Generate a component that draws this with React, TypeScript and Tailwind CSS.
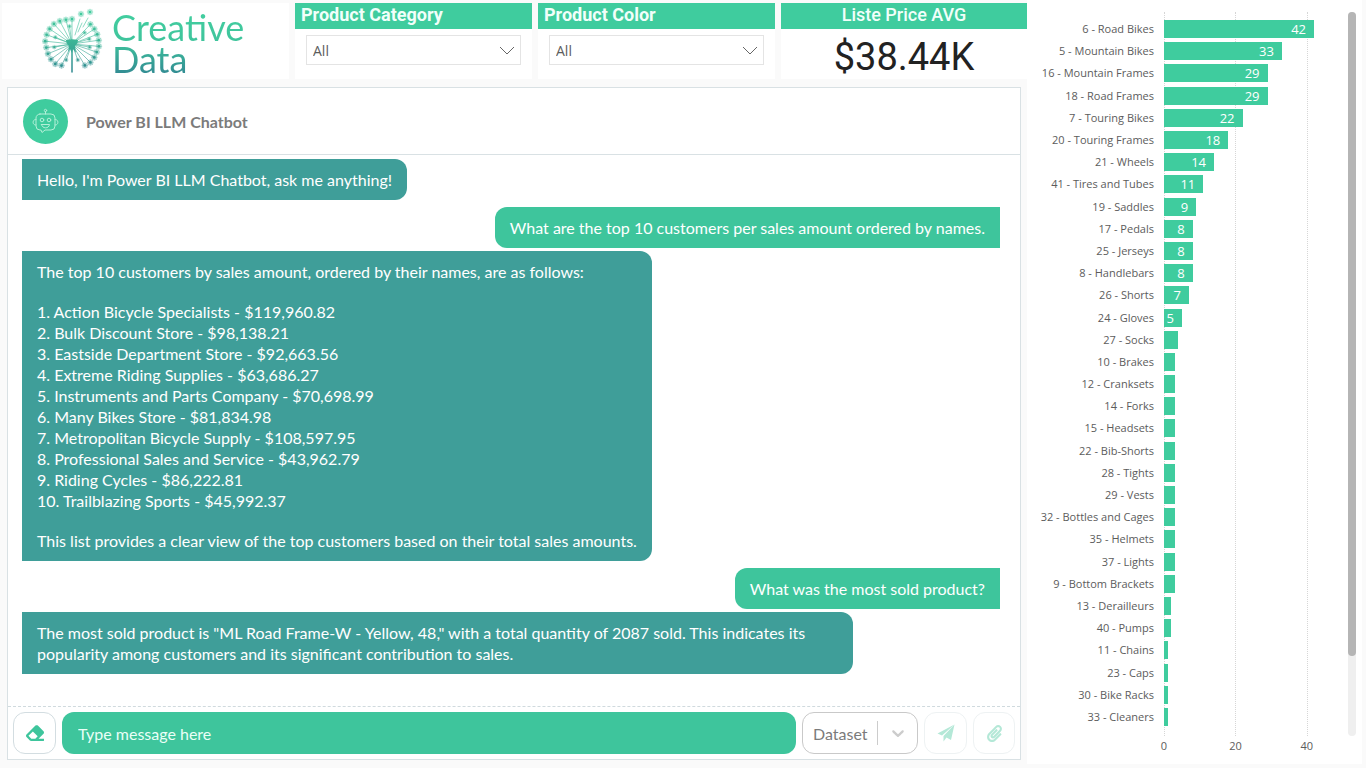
import { useState } from 'react'
import { FaEraser, FaPaperclip } from 'react-icons/fa'

type Message = {
  from: 'bot' | 'user'
  intro: string
  items?: string[]
  outro?: string
}

const messages: Message[] = [
  { from: 'bot', intro: "Hello, I'm Power BI LLM Chatbot, ask me anything!" },
  { from: 'user', intro: 'What are the top 10 customers per sales amount ordered by names.' },
  {
    from: 'bot',
    intro: 'The top 10 customers by sales amount, ordered by their names, are as follows:',
    items: [
      '1. Action Bicycle Specialists - $119,960.82',
      '2. Bulk Discount Store - $98,138.21',
      '3. Eastside Department Store - $92,663.56',
      '4. Extreme Riding Supplies - $63,686.27',
      '5. Instruments and Parts Company - $70,698.99',
      '6. Many Bikes Store - $81,834.98',
      '7. Metropolitan Bicycle Supply - $108,597.95',
      '8. Professional Sales and Service - $43,962.79',
      '9. Riding Cycles - $86,222.81',
      '10. Trailblazing Sports - $45,992.37',
    ],
    outro: 'This list provides a clear view of the top customers based on their total sales amounts.',
  },
  { from: 'user', intro: 'What was the most sold product?' },
  {
    from: 'bot',
    intro:
      'The most sold product is "ML Road Frame-W - Yellow, 48," with a total quantity of 2087 sold. This indicates its popularity among customers and its significant contribution to sales.',
  },
]

const categories: [string, number][] = [
  ['6 - Road Bikes', 42],
  ['5 - Mountain Bikes', 33],
  ['16 - Mountain Frames', 29],
  ['18 - Road Frames', 29],
  ['7 - Touring Bikes', 22],
  ['20 - Touring Frames', 18],
  ['21 - Wheels', 14],
  ['41 - Tires and Tubes', 11],
  ['19 - Saddles', 9],
  ['17 - Pedals', 8],
  ['25 - Jerseys', 8],
  ['8 - Handlebars', 8],
  ['26 - Shorts', 7],
  ['24 - Gloves', 5],
  ['27 - Socks', 4],
  ['10 - Brakes', 3],
  ['12 - Cranksets', 3],
  ['14 - Forks', 3],
  ['15 - Headsets', 3],
  ['22 - Bib-Shorts', 3],
  ['28 - Tights', 3],
  ['29 - Vests', 3],
  ['32 - Bottles and Cages', 3],
  ['35 - Helmets', 3],
  ['37 - Lights', 3],
  ['9 - Bottom Brackets', 3],
  ['13 - Derailleurs', 2],
  ['40 - Pumps', 2],
  ['11 - Chains', 1],
  ['23 - Caps', 1],
  ['30 - Bike Racks', 1],
  ['33 - Cleaners', 1],
]

const MAX = 42
const ticks = [0, 20, 40]

// seed heads: angle in degrees (0 = up, clockwise) and distance from the centre
const seeds: [number, number][] = [
  [0, 25], [-14, 25], [-28, 26], [-42, 27], [-56, 27], [-70, 27], [-84, 27], [-98, 26],
  [-112, 26], [-126, 26], [-140, 26], [-154, 24], [43, 27], [56, 27], [69, 27], [82, 27],
  [95, 27], [108, 26], [121, 26], [135, 26], [149, 25], [-8, 18], [-68, 18],
  [-100, 18], [-160, 17], [48, 17], [74, 18], [100, 18], [160, 17],
]

const SeedHead = ({ x, y, r }: { x: number; y: number; r: number }) => (
  <g>
    <circle cx={x} cy={y} r={r} opacity="0.35" stroke="none" />
    <path
      d={`M${x - r} ${y}h${2 * r}M${x} ${y - r}v${2 * r}M${x - r * 0.7} ${y - r * 0.7}l${r * 1.4} ${r * 1.4}M${x + r * 0.7} ${y - r * 0.7}l${-r * 1.4} ${r * 1.4}`}
      strokeWidth="0.4"
      opacity="0.6"
    />
    <circle cx={x} cy={y} r={r * 0.45} stroke="none" />
  </g>
)

const Dandelion = () => (
  <svg width="62" height="68" viewBox="0 0 62 68" aria-hidden="true">
    <defs>
      <linearGradient id="dandelion" gradientUnits="userSpaceOnUse" x1="0" y1="0" x2="0" y2="68">
        <stop offset="0" stopColor="#45cfa0" />
        <stop offset="0.5" stopColor="#3bb596" />
        <stop offset="1" stopColor="#2f8490" />
      </linearGradient>
    </defs>
    <g fill="url(#dandelion)" stroke="url(#dandelion)" strokeLinecap="round">
      {seeds.map(([angle, dist]) => {
        const rad = (angle * Math.PI) / 180
        const x = 30 + dist * Math.sin(rad)
        const y = 37 - dist * Math.cos(rad)
        return (
          <g key={`${angle}-${dist}`}>
            <path d={`M30 37L${x} ${y}`} strokeWidth="0.6" />
            <SeedHead x={x} y={y} r={dist > 20 ? 3 : 2} />
          </g>
        )
      })}
      <path d="M33 28L38 12M36 25L40 16M41 20L46 11" strokeWidth="0.6" />
      <SeedHead x={39} y={7} r={3} />
      <SeedHead x={48} y={5} r={3} />
      <path d="M24 33c4-1 8-1 12 0 0 3-2 5-3 6l1 7-3-4-1 4-2-4-2 3 1-6c-2-2-3-4-3-6z" stroke="none" />
      <path d="M30 40v25" strokeWidth="1.5" />
    </g>
  </svg>
)

const RobotIcon = () => (
  <svg
    width="27"
    height="27"
    viewBox="0 0 27 27"
    fill="none"
    stroke="#b4f0d8"
    strokeLinecap="round"
    strokeLinejoin="round"
    aria-hidden="true"
  >
    <circle cx="13.500" cy="2.500" r="1.200" />
    <path d="M13.500 3.700v2.300M8 6h11a4 4 0 0 1 4 4v8a4 4 0 0 1-4 4h-6l-3 2.500-1-2.500H8a4 4 0 0 1-4-4v-8a4 4 0 0 1 4-4z" />
    <path d="M4 11.500c-4-.5-4 6 0 5.500M23 11.500c4-.5 4 6 0 5.500M9.500 16.500h8c-.5 4.500-7.500 4.500-8 0z" />
    <circle cx="10" cy="12" r="1.800" />
    <circle cx="17" cy="12" r="1.800" />
  </svg>
)

const PlaneIcon = () => (
  <svg width="18" height="18" viewBox="0 0 18 18" fill="currentColor" aria-hidden="true">
    <path d="M17.500 0.500L0.500 9.500l4.500 2z" />
    <path d="M17.500 0.500L6.500 12v5.500l3-4 4.500 2.500z" />
  </svg>
)

const Slicer = ({ id, title }: { id: string; title: string }) => (
  <div className="flex-1 bg-white">
    <label
      htmlFor={id}
      className="block h-[26px] bg-[#3fcc9e] px-1.5 font-[Roboto,sans-serif] text-lg leading-6 font-bold text-[#f1fffa]"
    >
      {title}
    </label>
    <div className="relative mx-[11px] mt-1.5">
      <select
        id={id}
        className="block h-[30px] w-full appearance-none border border-[#e4e4e4] bg-white px-1.5 pt-0.5 font-['Open_Sans',sans-serif] text-sm text-[#5c5c5c]"
      >
        <option>All</option>
      </select>
      <svg
        width="16"
        height="9"
        viewBox="0 0 16 9"
        fill="none"
        stroke="#666"
        className="pointer-events-none absolute top-[11px] right-1.5"
        aria-hidden="true"
      >
        <path d="M1 1l7 7 7-7" />
      </svg>
    </div>
  </div>
)

const Bubble = ({ message }: { message: Message }) => {
  if (message.from === 'user') {
    return (
      <p className="mt-[7px] mb-[3px] max-w-[85%] self-end rounded-l-xl bg-[#3ec59c] px-[15px] py-2.5">
        {message.intro}
      </p>
    )
  }

  return (
    <div className="flex max-w-[85%] flex-col gap-[19px] self-start rounded-r-xl bg-[#3f9e99] px-[15px] py-2.5">
      <p>{message.intro}</p>
      {message.items && (
        <ol>
          {message.items.map((item) => (
            <li key={item}>{item}</li>
          ))}
        </ol>
      )}
      {message.outro && <p>{message.outro}</p>}
    </div>
  )
}

const ChatPanel = () => {
  const [draft, setDraft] = useState('')

  return (
    <section className="mt-2 mr-1.5 mb-2 ml-[7px] flex flex-1 flex-col border border-[#d9e1e4] bg-white font-[Lato,sans-serif] text-base leading-[21px]">
      <header className="flex h-[67px] items-center gap-[18px] border-b border-[#d9e1e4] px-[15px]">
        <span className="flex size-[45px] items-center justify-center rounded-full bg-[#3fcc9e]">
          <RobotIcon />
        </span>
        <h1 className="font-bold text-[#7b7b7b]">Power BI LLM Chatbot</h1>
      </header>

      <div className="flex flex-1 flex-col pt-1 pr-5 pb-8 pl-3.5 text-white">
        {messages.map((message) => (
          <Bubble key={message.intro} message={message} />
        ))}
      </div>

      <form
        className="flex gap-1.5 border-t border-dashed border-[#d0dade] p-[5px]"
        onSubmit={(e) => e.preventDefault()}
      >
        <button
          type="button"
          aria-label="Clear conversation"
          onClick={() => setDraft('')}
          className="flex h-[42px] w-[43px] items-center justify-center rounded-xl border border-[#d3dde1] text-[#3ec59c]"
        >
          <FaEraser size={18} />
        </button>
        <input
          type="text"
          aria-label="Message"
          placeholder="Type message here"
          value={draft}
          onChange={(e) => setDraft(e.target.value)}
          className="h-[42px] min-w-0 flex-1 rounded-xl bg-[#3ec59c] px-4 text-white placeholder:text-[#eafff7]"
        />
        <div className="relative">
          <select
            aria-label="Source"
            className="h-[42px] w-[116px] appearance-none rounded-xl border border-[#c9c9c9] bg-white pl-2.5 text-[#7b7b7b]"
          >
            <option>Dataset</option>
          </select>
          <span className="pointer-events-none absolute inset-y-0 right-2.5 flex items-center gap-2.5">
            <span className="h-6 w-px bg-[#cccccc]" />
            <svg width="20" height="20" viewBox="0 0 20 20" fill="#cccccc" aria-hidden="true">
              <path d="M4.516 7.548c0.436-0.446 1.043-0.481 1.576 0l3.908 3.747 3.908-3.747c0.533-0.481 1.141-0.446 1.574 0 0.436 0.445 0.408 1.197 0 1.615-0.406 0.418-4.695 4.502-4.695 4.502-0.217 0.223-0.502 0.335-0.787 0.335s-0.570-0.112-0.789-0.335c0 0-4.287-4.084-4.695-4.502s-0.436-1.170 0-1.615z" />
            </svg>
          </span>
        </div>
        <button
          type="submit"
          aria-label="Send"
          className="flex h-[42px] w-[43px] items-center justify-center rounded-xl border border-[#eef2f3] text-[#b4e8d7]"
        >
          <PlaneIcon />
        </button>
        <button
          type="button"
          aria-label="Attach file"
          className="flex h-[42px] w-[42px] items-center justify-center rounded-xl border border-[#eef2f3] text-[#b4e8d7]"
        >
          <FaPaperclip size={17} />
        </button>
      </form>
    </section>
  )
}

const CategoryChart = () => (
  <aside className="mr-1 mb-1 flex w-[335px] shrink-0 bg-white pt-3 pr-1.5 font-['Open_Sans',sans-serif] text-[#5c5c5c]">
    <div className="flex flex-1 flex-col">
      <div className="relative flex flex-1 flex-col pt-1.5 pb-2">
        <div className="absolute inset-y-0 right-[34px] left-[137px]">
          {ticks.map((tick) => (
            <span
              key={tick}
              className="absolute inset-y-0 border-l border-dotted border-[#d6d6d6]"
              style={{ left: `${(tick / MAX) * 100}%` }}
            />
          ))}
        </div>
        {categories.map(([name, count]) => (
          <div key={name} className="relative flex flex-1 items-center pr-[34px]">
            <span className="w-[127px] shrink-0 text-right text-[11px] leading-4">{name}</span>
            <div className="ml-2.5 flex-1">
              <div
                className="flex h-[18px] items-center justify-end bg-[#3fcc9e] text-[13px] leading-4 text-white"
                style={{ width: `${(count / MAX) * 100}%` }}
              >
                {count >= 5 && <span className="pr-2">{count}</span>}
              </div>
            </div>
          </div>
        ))}
      </div>
      <div className="relative mr-[34px] mb-2 ml-[137px] h-5 text-[11px] leading-5">
        {ticks.map((tick) => (
          <span
            key={tick}
            className="absolute -translate-x-1/2"
            style={{ left: `${(tick / MAX) * 100}%` }}
          >
            {tick}
          </span>
        ))}
      </div>
    </div>
    <div className="mb-7 w-2 rounded-full bg-[#efefef]">
      <div className="h-[89%] rounded-full bg-[#b5b5b5]" />
    </div>
  </aside>
)

export default function App() {
  return (
    <main className="flex min-h-screen bg-[#fafafa]">
      <div className="flex min-w-0 flex-1 flex-col">
        <div className="mt-[3px] ml-0.5 flex h-[76px] gap-1.5">
          <div className="flex w-[287px] shrink-0 items-center gap-2 bg-white pl-10">
            <Dandelion />
            <p className="bg-linear-to-b from-[#43d0a0] via-[#3fc49c] to-[#328a92] bg-clip-text pt-1 font-[Lato,sans-serif] text-4xl leading-8 text-transparent">
              Creative
              <br />
              Data
            </p>
          </div>
          <Slicer id="category" title="Product Category" />
          <Slicer id="color" title="Product Color" />
          <div className="w-[246px] shrink-0 bg-white text-center font-[Roboto,sans-serif]">
            <h2 className="h-[26px] bg-[#3fcc9e] text-lg leading-6 font-medium text-[#f1fffa]">
              Liste Price AVG
            </h2>
            <p className="pt-1 text-[38px] leading-[48px] text-[#222]">$38.44K</p>
          </div>
        </div>
        <ChatPanel />
      </div>
      <CategoryChart />
    </main>
  )
}
